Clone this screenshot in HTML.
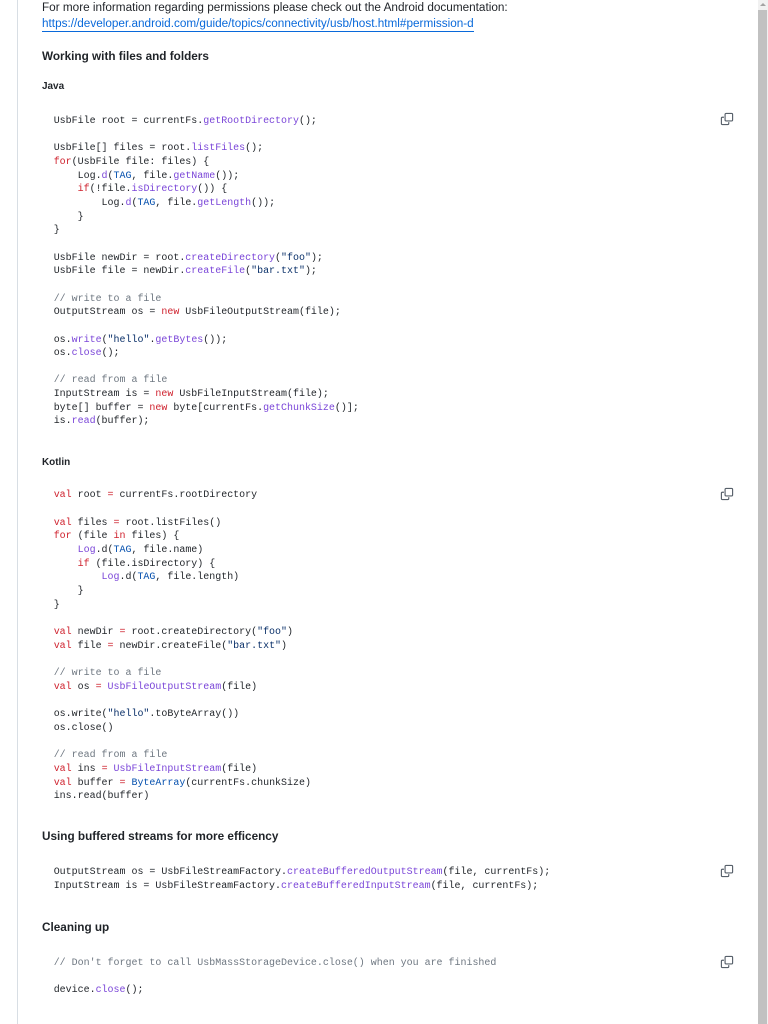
<!DOCTYPE html>
<html><head><meta charset="utf-8">
<style>
html,body{margin:0;padding:0;background:#fff;width:768px;height:1024px;overflow:hidden}
#wrap{position:absolute;left:0;top:0;width:768px;height:1024px;overflow:hidden;filter:blur(.35px)}
.a{position:absolute;white-space:pre}
.p{font:11.75px/19px "Liberation Sans",sans-serif;color:#1f2328;left:42px}
.p a{color:#0969da;text-decoration:none;border-bottom:1px solid #0969da;display:inline-block;line-height:14px}
.h{font:bold 11.75px/16px "Liberation Sans",sans-serif;color:#1f2328;left:42px}
.h4{font:bold 9.95px/12px "Liberation Sans",sans-serif;color:#1f2328;left:42px}
pre{position:absolute;left:53.7px;margin:0;font:9.97px/13.65px "Liberation Mono",monospace;color:#1f2328}
i{font-style:normal}
.r{color:#cf222e}.f{color:#7a45d8}.b{color:#0550ae}.s{color:#0a3069}.c{color:#6e7781}
svg{position:absolute;left:720px}
</style></head><body><div id="wrap">
<div class="a" style="left:17px;top:0;width:1px;height:1024px;background:#d8dee4"></div>
<div class="a" style="left:758px;top:0;width:10px;height:1024px;background:#f1f1f1"></div>
<div class="a" style="left:758px;top:10px;width:9px;height:1014px;background:#c1c1c1"></div>
<div class="a" style="left:760px;top:3px;width:0;height:0;border-left:3px solid transparent;border-right:3px solid transparent;border-bottom:3px solid #a3a3a3"></div>

<div class="a p" style="top:-2px">For more information regarding permissions please check out the Android documentation:</div>
<div class="a p" style="top:14px"><a>https://developer.android.com/guide/topics/connectivity/usb/host.html#permission-d</a></div>
<div class="a h" style="top:49px">Working with files and folders</div>
<div class="a h4" style="top:81px">Java</div>

<pre style="top:114px">UsbFile root = currentFs.<i class="f">getRootDirectory</i>();

UsbFile[] files = root.<i class="f">listFiles</i>();
<i class="r">for</i>(UsbFile file: files) {
    Log.<i class="f">d</i>(<i class="b">TAG</i>, file.<i class="f">getName</i>());
    <i class="r">if</i>(!file.<i class="f">isDirectory</i>()) {
        Log.<i class="f">d</i>(<i class="b">TAG</i>, file.<i class="f">getLength</i>());
    }
}

UsbFile newDir = root.<i class="f">createDirectory</i>(<i class="s">"foo"</i>);
UsbFile file = newDir.<i class="f">createFile</i>(<i class="s">"bar.txt"</i>);

<i class="c">// write to a file</i>
OutputStream os = <i class="r">new</i> UsbFileOutputStream(file);

os.<i class="f">write</i>(<i class="s">"hello"</i>.<i class="f">getBytes</i>());
os.<i class="f">close</i>();

<i class="c">// read from a file</i>
InputStream is = <i class="r">new</i> UsbFileInputStream(file);
byte[] buffer = <i class="r">new</i> byte[currentFs.<i class="f">getChunkSize</i>()];
is.<i class="f">read</i>(buffer);</pre>

<div class="a h4" style="top:457px">Kotlin</div>

<pre style="top:488.2px;line-height:13.68px"><i class="r">val</i> root <i class="r">=</i> currentFs.rootDirectory

<i class="r">val</i> files <i class="r">=</i> root.listFiles()
<i class="r">for</i> (file <i class="r">in</i> files) {
    <i class="f">Log</i>.d(<i class="b">TAG</i>, file.name)
    <i class="r">if</i> (file.isDirectory) {
        <i class="f">Log</i>.d(<i class="b">TAG</i>, file.length)
    }
}

<i class="r">val</i> newDir <i class="r">=</i> root.createDirectory(<i class="s">"foo"</i>)
<i class="r">val</i> file <i class="r">=</i> newDir.createFile(<i class="s">"bar.txt"</i>)

<i class="c">// write to a file</i>
<i class="r">val</i> os <i class="r">=</i> <i class="f">UsbFileOutputStream</i>(file)

os.write(<i class="s">"hello"</i>.toByteArray())
os.close()

<i class="c">// read from a file</i>
<i class="r">val</i> ins <i class="r">=</i> <i class="f">UsbFileInputStream</i>(file)
<i class="r">val</i> buffer <i class="r">=</i> <i class="b">ByteArray</i>(currentFs.chunkSize)
ins.read(buffer)</pre>

<div class="a h" style="top:829px">Using buffered streams for more efficency</div>

<pre style="top:865px">OutputStream os = UsbFileStreamFactory.<i class="f">createBufferedOutputStream</i>(file, currentFs);
InputStream is = UsbFileStreamFactory.<i class="f">createBufferedInputStream</i>(file, currentFs);</pre>

<div class="a h" style="top:920px">Cleaning up</div>

<pre style="top:956px"><i class="c">// Don't forget to call UsbMassStorageDevice.close() when you are finished</i>

device.<i class="f">close</i>();</pre>

<svg style="top:112px" width="14" height="14" viewBox="0 0 16 16" fill="none" stroke="#57606a" stroke-width="1.3"><path d="M4.5 6H2.8C2 6 1.6 6.5 1.6 7.2v6c0 .7.5 1.2 1.2 1.2h6c.7 0 1.2-.5 1.2-1.2v-1.7"/><rect x="5.8" y="1.6" width="8.6" height="8.6" rx="1.2"/></svg>
<svg style="top:487px" width="14" height="14" viewBox="0 0 16 16" fill="none" stroke="#57606a" stroke-width="1.3"><path d="M4.5 6H2.8C2 6 1.6 6.5 1.6 7.2v6c0 .7.5 1.2 1.2 1.2h6c.7 0 1.2-.5 1.2-1.2v-1.7"/><rect x="5.8" y="1.6" width="8.6" height="8.6" rx="1.2"/></svg>
<svg style="top:864px" width="14" height="14" viewBox="0 0 16 16" fill="none" stroke="#57606a" stroke-width="1.3"><path d="M4.5 6H2.8C2 6 1.6 6.5 1.6 7.2v6c0 .7.5 1.2 1.2 1.2h6c.7 0 1.2-.5 1.2-1.2v-1.7"/><rect x="5.8" y="1.6" width="8.6" height="8.6" rx="1.2"/></svg>
<svg style="top:955px" width="14" height="14" viewBox="0 0 16 16" fill="none" stroke="#57606a" stroke-width="1.3"><path d="M4.5 6H2.8C2 6 1.6 6.5 1.6 7.2v6c0 .7.5 1.2 1.2 1.2h6c.7 0 1.2-.5 1.2-1.2v-1.7"/><rect x="5.8" y="1.6" width="8.6" height="8.6" rx="1.2"/></svg>
</div></body></html>
